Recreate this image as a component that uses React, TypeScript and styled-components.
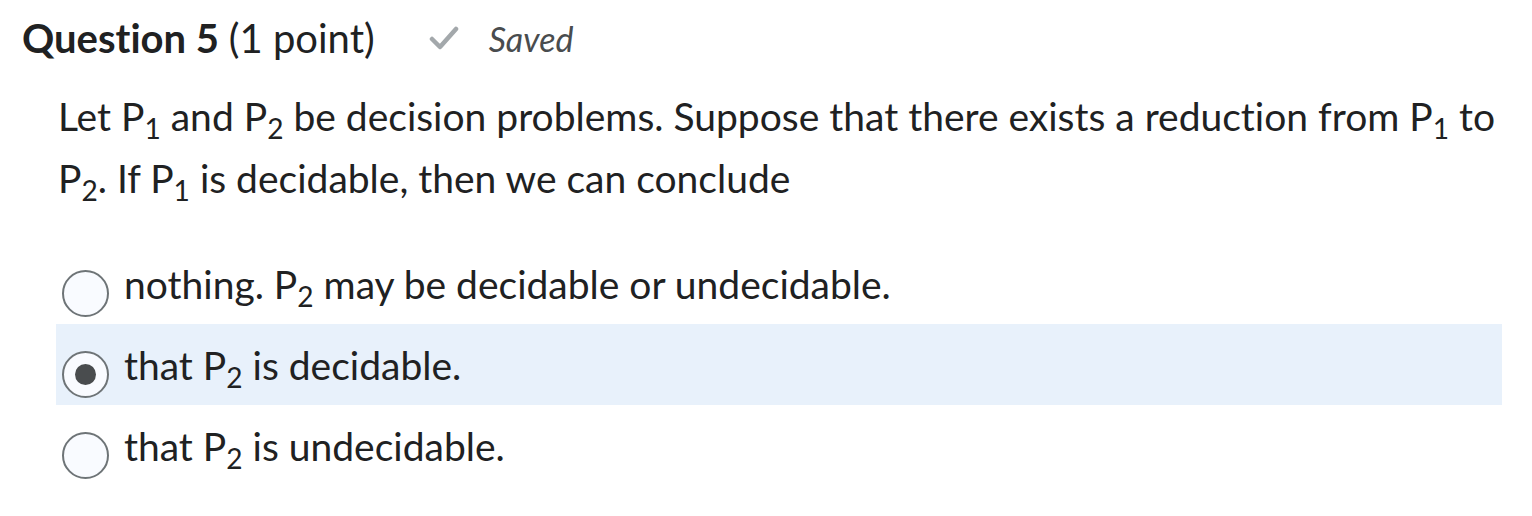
import React from 'react';
import styled, { createGlobalStyle } from 'styled-components';

const GlobalStyle = createGlobalStyle`
  html, body {
    margin: 0;
    padding: 0;
    background: #ffffff;
  }
  body {
    font-family: Lato, "Noto Sans", "Liberation Sans", sans-serif;
    font-variant-ligatures: no-common-ligatures;
    color: #202122;
  }
`;

const Page = styled.div`
  width: 1532px;
  height: 516px;
  box-sizing: border-box;
  padding: 12px 0 0 22px;
`;

const Header = styled.div`
  display: flex;
  align-items: baseline;
  height: 52px;
`;

const Title = styled.h2`
  margin: 0;
  font-size: 40px;
  font-weight: 700;
  line-height: 52px;
  color: #202122;
`;

const Points = styled.span`
  font-weight: 400;
`;

const SavedStatus = styled.div`
  display: flex;
  align-items: center;
  gap: 30px;
  margin-left: 54px;
  font-size: 34px;
  font-style: italic;
  color: #494c4e;
  align-self: center;
`;

const QuestionText = styled.p`
  margin: 21px 0 0 36px;
  width: 1460px;
  font-size: 39px;
  line-height: 62px;
`;

const Sub = styled.sub`
  font-size: 0.72em;
  line-height: 0;
  vertical-align: -0.3em;
`;

const Options = styled.div`
  margin: 34px 0 0 34px;
  width: 1446px;
  display: flex;
  flex-direction: column;
`;

const Option = styled.label<{ $selected?: boolean }>`
  display: flex;
  align-items: center;
  height: 81px;
  background: ${(p) => (p.$selected ? '#e8f1fb' : 'transparent')};
  font-size: 39px;
  cursor: pointer;
`;

const Radio = styled.span<{ $checked?: boolean }>`
  box-sizing: border-box;
  width: 47px;
  height: 47px;
  flex: none;
  margin: 20px 15px 0 6px;
  border: 2px solid #6e7477;
  border-radius: 50%;
  background: #f9fbff;
  display: flex;
  align-items: center;
  justify-content: center;

  &::after {
    content: '';
    display: ${(p) => (p.$checked ? 'block' : 'none')};
    width: 21px;
    height: 21px;
    border-radius: 50%;
    background: #494c4e;
  }
`;

const P = ({ n }: { n: number }) => (
  <>
    P<Sub>{n}</Sub>
  </>
);

const options = [
  { id: 1, text: <>nothing. <P n={2} /> may be decidable or undecidable.</> },
  { id: 2, text: <>that <P n={2} /> is decidable.</> },
  { id: 3, text: <>that <P n={2} /> is undecidable.</> },
];

export default function App() {
  const selected = 2;
  return (
    <Page>
      <GlobalStyle />
      <Header>
        <Title>
          Question 5 <Points>(1 point)</Points>
        </Title>
        <SavedStatus>
          <svg width="30" height="24" viewBox="0 0 30 24" aria-hidden="true">
            <path
              d="M3 13 L11 21 L27 3"
              fill="none"
              stroke="#a3a8ab"
              strokeWidth="4.5"
              strokeLinecap="round"
              strokeLinejoin="round"
            />
          </svg>
          Saved
        </SavedStatus>
      </Header>
      <QuestionText>
        Let <P n={1} /> and <P n={2} /> be decision problems. Suppose that there exists a reduction
        from <P n={1} /> to <P n={2} />. If <P n={1} /> is decidable, then we can conclude
      </QuestionText>
      <Options>
        {options.map((o) => (
          <Option key={o.id} $selected={o.id === selected}>
            <Radio $checked={o.id === selected} />
            <span>{o.text}</span>
          </Option>
        ))}
      </Options>
    </Page>
  );
}
